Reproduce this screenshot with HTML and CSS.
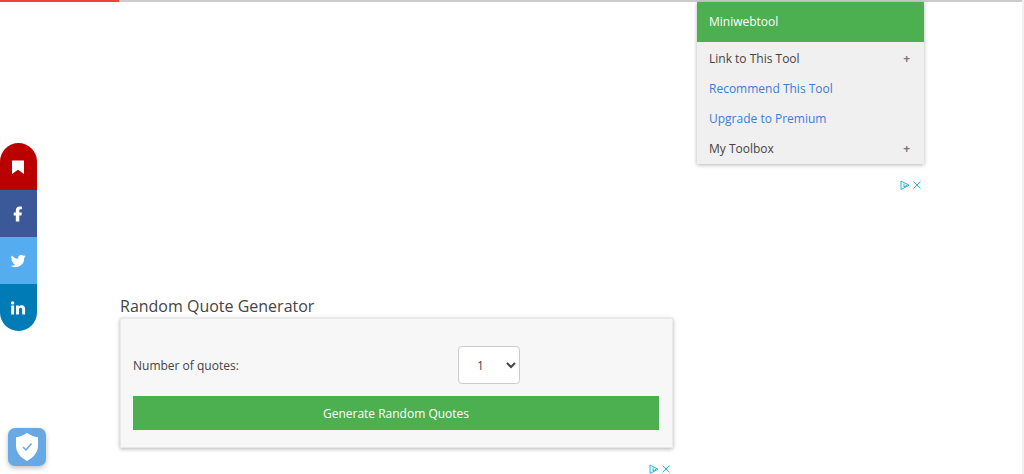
FILE: index.html
```html
<!DOCTYPE html>
<html lang="en">
<head>
  <meta charset="UTF-8">
  <meta name="viewport" content="width=device-width, initial-scale=1.0">
  <title>Random Quote Generator</title>
  <link rel="stylesheet" href="styles.css">
</head>
<body>
  <div class="progress"><div class="progress-bar"></div></div>

  <nav class="share" aria-label="Share">
    <a class="bookmark" href="#" aria-label="Bookmark">
      <svg viewBox="0 0 16 16"><path d="M2 1.500h12v13.500L8 10.800 2 15z"/></svg>
    </a>
    <a class="facebook" href="#" aria-label="Facebook">
      <svg viewBox="0 0 16 16"><path d="M5.800 15.500V9.400H3.700V6.400h2.100V4.800C5.800 2 7.400.6 10 .6c.9 0 1.900.2 1.900.2v2.500h-1.200c-1.100 0-1.400.6-1.400 1.300v1.800h2.600l-.5 3H9.300v6.100z"/></svg>
    </a>
    <a class="twitter" href="#" aria-label="Twitter">
      <svg viewBox="0 0 24 24"><path d="M23.600 4.900c-.8.400-1.700.6-2.600.8.900-.6 1.700-1.500 2-2.500-.9.500-1.900.9-2.900 1.100a4.600 4.600 0 0 0-7.900 4.200C8.400 8.300 5 6.500 2.700 3.700a4.600 4.600 0 0 0 1.400 6.200c-.7 0-1.400-.2-2.100-.6v.1c0 2.200 1.600 4.100 3.700 4.500-.7.200-1.400.2-2.100.1.600 1.800 2.300 3.200 4.300 3.200A9.300 9.300 0 0 1 1 19.100a13.100 13.100 0 0 0 20.200-11.700c.9-.7 1.700-1.500 2.400-2.500z"/></svg>
    </a>
    <a class="linkedin" href="#" aria-label="LinkedIn">
      <svg viewBox="0 0 16 16"><path d="M1.200 5.500h2.900v9H1.200zM2.650 1.200a1.700 1.700 0 1 1 0 3.400 1.700 1.700 0 0 1 0-3.400zM6 5.500h2.800v1.200c.4-.8 1.400-1.500 2.800-1.500 2.900 0 3.500 1.900 3.500 4.400v4.900h-2.900v-4.400c0-1 0-2.400-1.500-2.400S9 8.900 9 10.100v4.400H6z"/></svg>
    </a>
  </nav>

  <div class="page">
    <main>
      <div class="ad-space"></div>
      <h1>Random Quote Generator</h1>
      <form class="card">
        <div class="field">
          <label for="count">Number of quotes:</label>
          <select id="count">
            <option>1</option>
            <option>2</option>
            <option>3</option>
            <option>4</option>
            <option>5</option>
          </select>
        </div>
        <button type="button" class="generate">Generate Random Quotes</button>
      </form>
      <div class="ad-choices">
        <svg viewBox="0 0 10 10"><path d="M1 1v8.500M1 1l8 4.200-8 4.300M4 3.500v3.500l3-1.700"/></svg>
        <svg viewBox="0 0 10 10"><path d="M1.500 1.500l7 7M8.500 1.500l-7 7"/></svg>
      </div>
    </main>

    <aside>
      <div class="menu">
        <h2>Miniwebtool</h2>
        <ul>
          <li><button type="button">Link to This Tool <span class="plus">+</span></button></li>
          <li><a href="#">Recommend This Tool</a></li>
          <li><a href="#">Upgrade to Premium</a></li>
          <li><button type="button">My Toolbox <span class="plus">+</span></button></li>
        </ul>
      </div>
      <div class="ad-choices">
        <svg viewBox="0 0 10 10"><path d="M1 1v8.500M1 1l8 4.200-8 4.300M4 3.500v3.500l3-1.700"/></svg>
        <svg viewBox="0 0 10 10"><path d="M1.500 1.500l7 7M8.500 1.500l-7 7"/></svg>
      </div>
    </aside>
  </div>

  <button type="button" class="shield" aria-label="Privacy settings">
    <svg viewBox="0 0 24 30">
      <path class="shield-body" d="M12 1c3.300 2.400 7 3.700 11 4.200v8.300c0 7-4.500 12-11 15.500C5.500 25.500 1 20.500 1 13.500V5.200C5 4.700 8.700 3.400 12 1z"/>
      <path class="shield-check" d="M8 15l3 3 5.500-6.500"/>
    </svg>
  </button>
</body>
</html>
```
FILE: styles.css
```css
* { box-sizing: border-box; margin: 0; padding: 0; }
body {
  font-family: 'Segoe UI', 'Open Sans', sans-serif;
  font-size: 12px;
  color: #444;
  background: #fff;
  min-height: 100vh;
  border-right: 2px solid #f0f0f0;
}
button, select { font: inherit; color: inherit; }
a { color: #3b7dd8; text-decoration: none; }

/* Reading progress */
.progress { height: 2px; background: #ccc; }
.progress-bar { width: 119px; height: 2px; background: #f44336; }

.page {
  display: grid;
  grid-template-columns: 1fr 227px;
  gap: 24px;
  padding: 0 98px 0 120px;
}
.ad-space { height: 292px; }
h1 {
  font-size: 16px;
  font-weight: 400;
  line-height: 24px;
}

/* Form */
.card {
  background: #f7f7f7;
  border: 1px solid #e8e8e8;
  box-shadow: 0 1px 4px rgba(0,0,0,0.3);
  padding: 27px 13px 17px 12px;
}
.field {
  display: grid;
  grid-template-columns: 325px 62px;
  align-items: center;
  margin-bottom: 12px;
}
.field select {
  height: 38px;
  padding-left: 14px;
  background: #fff;
  border: 1px solid #ccc;
  border-radius: 4px;
}
.generate {
  display: block;
  width: 100%;
  height: 34px;
  background: #4caf50;
  border: none;
  color: #fff;
  cursor: pointer;
}

/* Sidebar */
.menu {
  background: #f0f0f0;
  box-shadow: 0 1px 4px rgba(0,0,0,0.3);
}
.menu h2 {
  background: #4caf50;
  color: #fff;
  font-size: 12px;
  font-weight: 400;
  line-height: 40px;
  padding: 0 12px;
}
.menu ul { list-style: none; padding: 1px 0; }
.menu li a, .menu li button {
  display: flex;
  justify-content: space-between;
  align-items: center;
  width: 100%;
  height: 30px;
  padding: 0 14px 0 12px;
  background: none;
  border: none;
  cursor: pointer;
}
.plus { color: #777; font-weight: 700; }

.ad-choices {
  display: flex;
  justify-content: flex-end;
  gap: 2px;
  padding: 16px 2px 0 0;
}
.ad-choices svg {
  width: 10px;
  height: 10px;
  fill: none;
  stroke: #21b8d0;
}

/* Share buttons */
.share {
  position: fixed;
  left: 0;
  top: 143px;
  width: 37px;
  border-radius: 19px;
  overflow: hidden;
}
.share a {
  display: flex;
  justify-content: center;
  align-items: center;
  height: 47px;
  padding-right: 2px;
}
.share svg { width: 16px; height: 16px; fill: #fff; }
.bookmark { background: #b00; }
.facebook { background: #3b5998; }
.twitter { background: #55acee; }
.linkedin { background: #007bb5; }

.shield {
  position: fixed;
  left: 8px;
  bottom: 8px;
  display: flex;
  justify-content: center;
  align-items: center;
  width: 38px;
  height: 38px;
  background: #68a8e5;
  border: none;
  border-radius: 7px;
  box-shadow: 0 2px 5px rgba(0,0,0,0.25);
  cursor: pointer;
}
.shield svg { width: 24px; height: 30px; }
.shield-body { fill: #fff; }
.shield-check { fill: none; stroke: #68a8e5; stroke-width: 1.500; }
```
